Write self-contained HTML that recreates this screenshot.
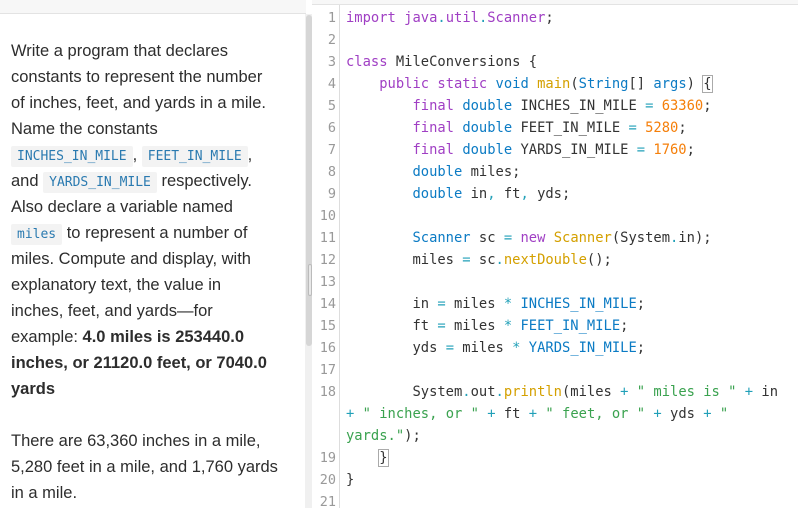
<!DOCTYPE html>
<html><head><meta charset="utf-8"><style>
*{margin:0;padding:0;box-sizing:border-box}
body{width:798px;height:508px;overflow:hidden;background:#fff;position:relative;font-family:"Liberation Sans",sans-serif}
#topl{position:absolute;left:0;top:0;width:306px;height:14px;background:#f7f7f7;border-bottom:1px solid #e3e3e3}
#topr{position:absolute;left:312px;top:0;width:486px;height:5px;background:#f7f7f7;border-bottom:1px solid #e3e3e3}
#track{position:absolute;left:305px;top:14px;width:7px;height:494px;background:#f0f0f0}
#thumb{position:absolute;left:306px;top:15px;width:6px;height:331px;background:#d6d6d6;border-radius:3px}
#handle{position:absolute;left:308px;top:264px;width:4px;height:32px;border:1px solid #bbb;border-radius:2px;background:#e8e8e8}
#ed{position:absolute;left:312px;top:5px;width:486px;height:503px;border-left:1px solid #ddd}
#gut{position:absolute;left:312px;top:5px;width:28px;height:503px;border-right:1px solid #ddd;background:#fff}
.l{position:absolute;left:11px;font-size:16.5px;color:#2d2d2d;line-height:26px;white-space:nowrap}
.c{font-family:"DejaVu Sans Mono",monospace;font-size:13px;color:#2a7ab0;background:#f3f3f3;padding:3px 6px;border-radius:2px}
.n{position:absolute;left:312px;width:24px;text-align:right;font-family:"DejaVu Sans Mono",monospace;font-size:13.5px;color:#999;line-height:22px}
.k{position:absolute;left:346px;font-family:"DejaVu Sans Mono",monospace;font-size:13.8px;color:#333;line-height:22px;white-space:pre}
.p{color:#a03fc4}.b{color:#0b7bc4}.o{color:#f57f0a}.g{color:#d4a000}.s{color:#3aa24f}.y{color:#21a0b8}
.br{outline:1px solid #aaa}
</style></head><body>
<div id="topl"></div><div id="topr"></div>
<div id="track"></div><div id="thumb"></div><div id="handle"></div>
<div id="ed"></div><div id="gut"></div>

<div class="l" style="top:38px">Write a program that declares</div>
<div class="l" style="top:64px">constants to represent the number</div>
<div class="l" style="top:90px">of inches, feet, and yards in a mile.</div>
<div class="l" style="top:116px">Name the constants</div>
<div class="l" style="top:142px"><span class="c">INCHES_IN_MILE</span>, <span class="c">FEET_IN_MILE</span>,</div>
<div class="l" style="top:168px">and <span class="c">YARDS_IN_MILE</span> respectively.</div>
<div class="l" style="top:194px">Also declare a variable named</div>
<div class="l" style="top:220px"><span class="c">miles</span> to represent a number of</div>
<div class="l" style="top:246px">miles. Compute and display, with</div>
<div class="l" style="top:272px">explanatory text, the value in</div>
<div class="l" style="top:298px">inches, feet, and yards—for</div>
<div class="l" style="top:324px">example: <b>4.0 miles is 253440.0</b></div>
<div class="l" style="top:350px"><b>inches, or 21120.0 feet, or 7040.0</b></div>
<div class="l" style="top:376px"><b>yards</b></div>
<div class="l" style="top:428px">There are 63,360 inches in a mile,</div>
<div class="l" style="top:454px">5,280 feet in a mile, and 1,760 yards</div>
<div class="l" style="top:480px">in a mile.</div>

<div class="n" style="top:7px">1</div><div class="n" style="top:29px">2</div><div class="n" style="top:51px">3</div><div class="n" style="top:73px">4</div><div class="n" style="top:95px">5</div><div class="n" style="top:117px">6</div><div class="n" style="top:139px">7</div><div class="n" style="top:161px">8</div><div class="n" style="top:183px">9</div><div class="n" style="top:205px">10</div><div class="n" style="top:227px">11</div><div class="n" style="top:249px">12</div><div class="n" style="top:271px">13</div><div class="n" style="top:293px">14</div><div class="n" style="top:315px">15</div><div class="n" style="top:337px">16</div><div class="n" style="top:359px">17</div><div class="n" style="top:381px">18</div><div class="n" style="top:447px">19</div><div class="n" style="top:469px">20</div><div class="n" style="top:491px">21</div>

<div class="k" style="top:7px"><span class="p">import</span> <span class="p">java</span><span class="y">.</span><span class="p">util</span><span class="y">.</span><span class="p">Scanner</span>;</div>
<div class="k" style="top:51px"><span class="p">class</span> MileConversions {</div>
<div class="k" style="top:73px">    <span class="p">public</span> <span class="p">static</span> <span class="b">void</span> <span class="g">main</span>(<span class="b">String</span>[] <span class="b">args</span>) <span class="br">{</span></div>
<div class="k" style="top:95px">        <span class="p">final</span> <span class="b">double</span> INCHES_IN_MILE <span class="y">=</span> <span class="o">63360</span>;</div>
<div class="k" style="top:117px">        <span class="p">final</span> <span class="b">double</span> FEET_IN_MILE <span class="y">=</span> <span class="o">5280</span>;</div>
<div class="k" style="top:139px">        <span class="p">final</span> <span class="b">double</span> YARDS_IN_MILE <span class="y">=</span> <span class="o">1760</span>;</div>
<div class="k" style="top:161px">        <span class="b">double</span> miles;</div>
<div class="k" style="top:183px">        <span class="b">double</span> in<span class="y">,</span> ft<span class="y">,</span> yds;</div>
<div class="k" style="top:227px">        <span class="b">Scanner</span> sc <span class="y">=</span> <span class="p">new</span> <span class="g">Scanner</span>(System<span class="y">.</span>in);</div>
<div class="k" style="top:249px">        miles <span class="y">=</span> sc<span class="y">.</span><span class="g">nextDouble</span>();</div>
<div class="k" style="top:293px">        in <span class="y">=</span> miles <span class="y">*</span> <span class="b">INCHES_IN_MILE</span>;</div>
<div class="k" style="top:315px">        ft <span class="y">=</span> miles <span class="y">*</span> <span class="b">FEET_IN_MILE</span>;</div>
<div class="k" style="top:337px">        yds <span class="y">=</span> miles <span class="y">*</span> <span class="b">YARDS_IN_MILE</span>;</div>
<div class="k" style="top:381px">        System<span class="y">.</span>out<span class="y">.</span><span class="g">println</span>(miles <span class="y">+</span> <span class="s">" miles is "</span> <span class="y">+</span> in</div>
<div class="k" style="top:403px"><span class="y">+</span> <span class="s">" inches, or "</span> <span class="y">+</span> ft <span class="y">+</span> <span class="s">" feet, or "</span> <span class="y">+</span> yds <span class="y">+</span> <span class="s">"</span></div>
<div class="k" style="top:425px"><span class="s">yards."</span>);</div>
<div class="k" style="top:447px">    <span class="br">}</span></div>
<div class="k" style="top:469px">}</div>
</body></html>
